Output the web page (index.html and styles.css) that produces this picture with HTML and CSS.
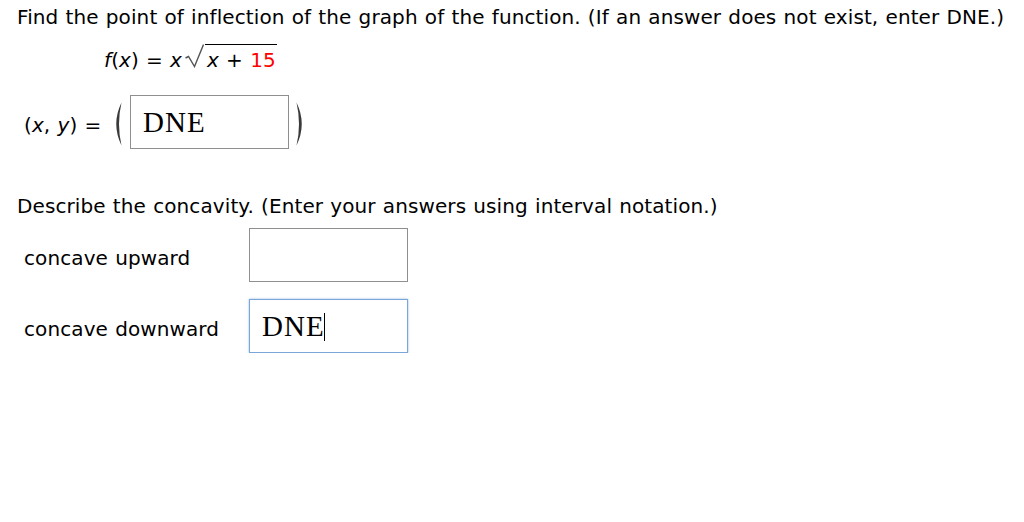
FILE: index.html
```html
<!DOCTYPE html>
<html>
<head>
<meta charset="utf-8">
<link rel="stylesheet" href="styles.css">
</head>
<body>
<div class="page">
  <p class="prompt">Find the point of inflection of the graph of the function. (If an answer does not exist, enter DNE.)</p>
  <div class="formula"><i>f</i>(<i>x</i>) = <i>x</i><svg class="radical" width="19" height="24" viewBox="0 0 19 24"><path d="M0.5 14 L3.5 12.5 L9.5 22.5 L18.5 0.5" fill="none" stroke="#555" stroke-width="1.4" stroke-linejoin="miter"/></svg><span class="radicand"><i>x</i> + <span class="red">15</span></span></div>
  <div class="row point">
    <span class="lbl-point">(<i>x</i>, <i>y</i>) =</span>
    <svg class="paren" width="11" height="44" viewBox="0 0 11 44"><path d="M9.5 0.5 Q-1 22 9.5 43.5 Q4.5 22 9.5 0.5 Z" fill="#3a3a3a"/></svg>
    <div class="box">DNE</div>
    <svg class="paren right" width="11" height="44" viewBox="0 0 11 44"><path d="M1.5 0.5 Q12 22 1.5 43.5 Q6.5 22 1.5 0.5 Z" fill="#3a3a3a"/></svg>
  </div>
  <p class="prompt describe">Describe the concavity. (Enter your answers using interval notation.)</p>
  <div class="row up">
    <span class="lbl">concave upward</span>
    <div class="box">&nbsp;</div>
  </div>
  <div class="row down">
    <span class="lbl">concave downward</span>
    <div class="box focus">DNE<span class="caret"></span></div>
  </div>
</div>
</body>
</html>
```
FILE: styles.css
```css
html, body {
  margin: 0;
  padding: 0;
  background: #fff;
}
body {
  font-family: "DejaVu Sans", Verdana, sans-serif;
  font-size: 20px;
  word-spacing: 0.7px;
  letter-spacing: 0.1px;
  color: #000;
}
.page {
  padding: 5px 0 0 17px;
}
.prompt {
  margin: 0;
  line-height: 24px;
  white-space: nowrap;
}
.formula {
  margin: 19px 0 0 87px;
  line-height: 24px;
  white-space: nowrap;
}
.formula i {
  font-style: italic;
}
.radical {
  vertical-align: -1px;
  margin: -8px 1px 0 3px;
}
.radicand {
  border-top: 1px solid #000;
  padding-top: 3px;
  padding-left: 2px;
  padding-right: 1px;
}
.red {
  color: #f00;
}
.row {
  display: flex;
  align-items: baseline;
  margin-left: 7px;
}
.point {
  margin-top: 23px;
}
.lbl-point {
  width: 88px;
  line-height: 24px;
}
.paren {
  align-self: center;
  margin-top: 3px;
}
.point .box {
  margin-left: 7px;
}
.paren.right {
  margin-left: 6px;
}
.box {
  box-sizing: border-box;
  width: 159px;
  height: 54px;
  border: 1px solid #8f8f8f;
  font-family: "Liberation Serif", "Times New Roman", serif;
  font-size: 29px;
  letter-spacing: 1px;
  word-spacing: 0;
  line-height: 52px;
  padding-left: 12px;
  white-space: nowrap;
}
.describe {
  margin-top: 45px;
}
.up {
  margin-top: 10px;
}
.down {
  margin-top: 17px;
}
.lbl {
  width: 225px;
  line-height: 24px;
}
.focus {
  border-color: #7aa6d8;
  box-shadow: 0 0 2px rgba(100, 150, 220, 0.7);
}
.caret {
  display: inline-block;
  width: 1px;
  height: 28px;
  margin-left: -1px;
  background: #000;
  vertical-align: -5px;
}
```
